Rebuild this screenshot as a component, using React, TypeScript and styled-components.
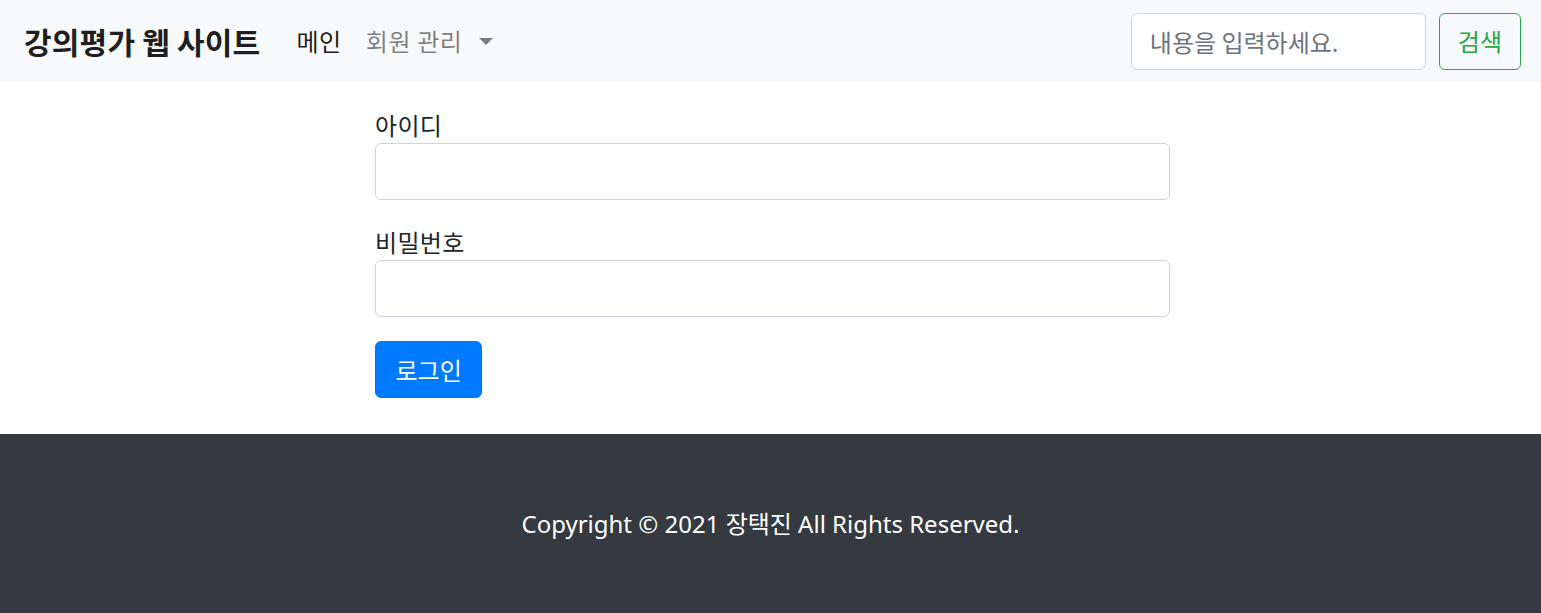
import styled, { createGlobalStyle } from 'styled-components';

const GlobalStyle = createGlobalStyle`
  html, body {
    margin: 0;
    padding: 0;
    background: #ffffff;
  }

  body {
    font-family: 'Noto Sans', 'Noto Sans CJK KR', sans-serif;
    font-size: 24px;
    line-height: 1.5;
    color: #212529;
  }

  * {
    box-sizing: border-box;
  }
`;

const Navbar = styled.nav`
  display: flex;
  align-items: center;
  justify-content: space-between;
  height: 82px;
  padding: 0 20px 0 24px;
  background: #f8f9fa;
`;

const Left = styled.div`
  display: flex;
  align-items: center;
`;

const Brand = styled.a`
  margin-right: 24px;
  font-family: 'Noto Sans CJK KR', sans-serif;
  font-size: 30px;
  font-weight: 700;
  line-height: 45px;
  letter-spacing: 0.2px;
  color: rgba(0, 0, 0, 0.9);
  text-decoration: none;
`;

const NavList = styled.ul`
  display: flex;
  margin: 0;
  padding: 0;
  list-style: none;
`;

const NavLink = styled.a<{ $active?: boolean }>`
  display: flex;
  align-items: center;
  padding: 0 12px;
  font-family: 'Noto Sans CJK KR', sans-serif;
  font-size: 24px;
  line-height: 36px;
  letter-spacing: 0.6px;
  color: ${({ $active }) => ($active ? 'rgba(0, 0, 0, 0.9)' : 'rgba(0, 0, 0, 0.5)')};
  text-decoration: none;
`;

const Caret = styled.span`
  display: inline-block;
  margin-left: 16px;
  width: 0;
  height: 0;
  border-top: 7px solid rgba(0, 0, 0, 0.5);
  border-left: 7px solid transparent;
  border-right: 7px solid transparent;
`;

const SearchForm = styled.form`
  display: flex;
  align-items: center;
  gap: 13px;
  margin: 0;
`;

const Input = styled.input<{ $width?: string }>`
  display: block;
  width: ${({ $width }) => $width ?? '100%'};
  height: 57px;
  padding: 9px 18px;
  font-family: 'Noto Sans CJK KR', sans-serif;
  font-size: 24px;
  line-height: 1.5;
  color: #495057;
  background: #ffffff;
  border: 1px solid #ced4da;
  border-radius: 6px;
  outline: none;

  &::placeholder {
    color: #6c757d;
  }
`;

const Button = styled.button<{ $variant: 'primary' | 'outline-success' }>`
  height: 57px;
  padding: ${({ $variant }) => ($variant === 'primary' ? '9px 19.5px' : '9px 18px')};
  font-family: 'Noto Sans CJK KR', sans-serif;
  font-size: 24px;
  line-height: 1.5;
  border-radius: 6px;
  cursor: pointer;
  color: ${({ $variant }) => ($variant === 'primary' ? '#ffffff' : '#28a745')};
  background: ${({ $variant }) => ($variant === 'primary' ? '#007bff' : 'transparent')};
  border: 1px solid ${({ $variant }) => ($variant === 'primary' ? '#007bff' : '#28a745')};
`;

const Container = styled.main`
  max-width: 840px;
  margin: 0 auto;
  padding: 25px 20.5px 36px 24.5px;
`;

const FormGroup = styled.div`
  margin-bottom: 24px;
`;

const Label = styled.label`
  display: block;
  margin: 0;
  font-family: 'Noto Sans CJK KR', sans-serif;
  font-size: 24px;
  line-height: 36px;
  letter-spacing: 0.3px;
  color: #212529;
`;

const Footer = styled.footer`
  padding: 72px 0;
  background: #343a40;
  color: #ffffff;
  text-align: center;
  font-size: 24px;
  line-height: 36px;
`;

export default function App() {
  return (
    <>
      <GlobalStyle />
      <Navbar>
        <Left>
          <Brand href="#">강의평가 웹 사이트</Brand>
          <NavList>
            <li>
              <NavLink href="#" $active>
                메인
              </NavLink>
            </li>
            <li>
              <NavLink href="#">
                회원 관리
                <Caret />
              </NavLink>
            </li>
          </NavList>
        </Left>
        <SearchForm onSubmit={(e) => e.preventDefault()}>
          <Input type="search" placeholder="내용을 입력하세요." $width="295px" />
          <Button type="submit" $variant="outline-success">
            검색
          </Button>
        </SearchForm>
      </Navbar>

      <Container>
        <form onSubmit={(e) => e.preventDefault()}>
          <FormGroup>
            <Label>아이디</Label>
            <Input type="text" name="userID" />
          </FormGroup>
          <FormGroup>
            <Label>비밀번호</Label>
            <Input type="password" name="userPassword" />
          </FormGroup>
          <Button type="submit" $variant="primary">
            로그인
          </Button>
        </form>
      </Container>

      <Footer>Copyright © 2021 장택진 All Rights Reserved.</Footer>
    </>
  );
}
